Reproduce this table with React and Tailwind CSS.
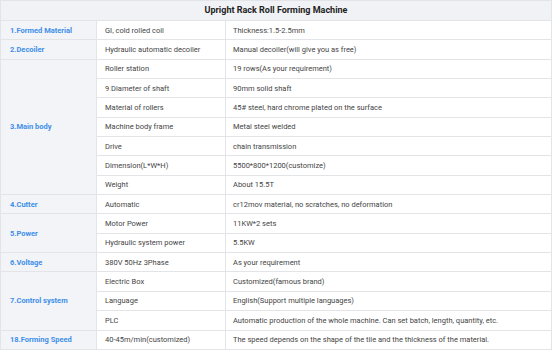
const sections = [
  {
    label: '1.Formed Material',
    rows: [['GI, cold rolled coil', 'Thickness:1.5-2.5mm']],
  },
  {
    label: '2.Decoiler',
    rows: [['Hydraulic automatic decoiler', 'Manual decoiler(will give you as free)']],
  },
  {
    label: '3.Main body',
    rows: [
      ['Roller station', '19 rows(As your requirement)'],
      ['9 Diameter of shaft', '90mm solid shaft'],
      ['Material of rollers', '45# steel, hard chrome plated on the surface'],
      ['Machine body frame', 'Metal steel welded'],
      ['Drive', 'chain transmission'],
      ['Dimension(L*W*H)', '5500*800*1200(customize)'],
      ['Weight', 'About 15.5T'],
    ],
  },
  {
    label: '4.Cutter',
    rows: [['Automatic', 'cr12mov material, no scratches, no deformation']],
  },
  {
    label: '5.Power',
    rows: [
      ['Motor Power', '11KW*2 sets'],
      ['Hydraulic system power', '5.5KW'],
    ],
  },
  {
    label: '6.Voltage',
    rows: [['380V 50Hz 3Phase', 'As your requirement']],
  },
  {
    label: '7.Control system',
    rows: [
      ['Electric Box', 'Customized(famous brand)'],
      ['Language', 'English(Support multiple languages)'],
      ['PLC', 'Automatic production of the whole machine. Can set batch, length, quantity, etc.'],
    ],
  },
  {
    label: '18.Forming Speed',
    rows: [['40-45m/min(customized)', 'The speed depends on the shape of the tile and the thickness of the material.']],
  },
];

export default function App() {
  return (
    <div className="w-[554px] h-[350px] bg-white font-['Roboto',sans-serif] overflow-hidden">
      <table className="w-[552px] border-collapse table-fixed text-[7.5px] text-[#444]">
        <colgroup>
          <col className="w-[96px]" />
          <col className="w-[129px]" />
          <col />
        </colgroup>
        <thead>
          <tr className="h-[20px]">
            <th
              colSpan={3}
              className="border border-[#e2e4e8] bg-[#f1f2f6] text-center text-[9px] font-bold text-[#222]"
            >
              Upright Rack Roll Forming Machine
            </th>
          </tr>
        </thead>
        <tbody>
          {sections.map((section) =>
            section.rows.map((row, i) => (
              <tr key={section.label + i} className="h-[19.35px]">
                {i === 0 && (
                  <td
                    rowSpan={section.rows.length}
                    className="border border-[#e2e4e8] bg-[#f3f4f8] pl-[9px] text-[7.5px] font-bold text-[#3d8fe8] align-middle"
                  >
                    {section.label}
                  </td>
                )}
                <td className="border border-[#e2e4e8] pl-[8px] whitespace-nowrap">{row[0]}</td>
                <td className="border border-[#e2e4e8] pl-[7px] whitespace-nowrap">{row[1]}</td>
              </tr>
            ))
          )}
        </tbody>
      </table>
    </div>
  );
}
